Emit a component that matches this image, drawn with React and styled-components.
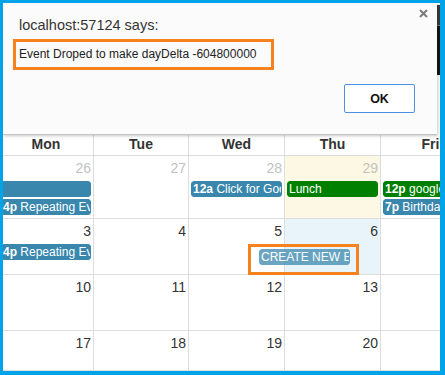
import React from "react";
import styled, { createGlobalStyle } from "styled-components";

const Global = createGlobalStyle`
  html, body { margin: 0; padding: 0; background: #fff; }
  body { font-family: "Liberation Sans", Arial, sans-serif; }
`;

const Frame = styled.div`
  position: relative;
  box-sizing: border-box;
  width: 445px;
  height: 375px;
  border-style: solid;
  border-color: #00a2e8;
  border-width: 3px 5px 4px 3px;
  overflow: hidden;
  background: #fff;
  display: flex;
  flex-direction: column;
`;

const Navbar = styled.div`
  flex: none;
  margin-top: 2px;
  height: 70px;
  background: linear-gradient(#3d3d3d 0 20px, #767676 20px 21px, #141414 21px);
`;

const Toolbar = styled.div`
  flex: none;
  height: 59px;
`;

const COLS = "95px 95px 96px 96px 100px";

const Calendar = styled.div`
  position: relative;
  flex: 1;
  margin-left: -4px;
  display: flex;
  flex-direction: column;
  font-size: 14px;
  color: #333;
`;

const HeadRow = styled.div`
  flex: none;
  display: grid;
  grid-template-columns: ${COLS};
  border-bottom: 1px solid #ddd;
`;

const HeadCell = styled.div`
  height: 21px;
  line-height: 21px;
  text-align: center;
  font-weight: bold;
  border-right: 1px solid #ddd;
`;

const Week = styled.div`
  box-sizing: border-box;
  display: grid;
  grid-template-columns: ${COLS};
  height: ${(p) => (p.$h ? `${p.$h}px` : "auto")};
  flex: ${(p) => (p.$h ? "none" : "1")};
  border-bottom: 1px solid #ddd;
`;

const DayCell = styled.div`
  min-width: 0;
  overflow: hidden;
  display: flex;
  flex-direction: column;
  border-right: 1px solid #ddd;
  background: ${(p) =>
    p.$mark === "today" ? "#fcf8e3" : p.$mark === "drop" ? "#e8f4fa" : "transparent"};
`;

const DayNum = styled.div`
  padding: 2px;
  line-height: 20px;
  text-align: right;
  color: ${(p) => (p.$other ? "#c2c2c2" : "#333")};
`;

const EventList = styled.div`
  display: flex;
  flex-direction: column;
  gap: 2px;
  padding-top: 1px;
`;

const Event = styled.div`
  box-sizing: border-box;
  height: 16px;
  margin: 0 2px 0 ${(p) => (p.$cont ? "0" : "2px")};
  padding: 0 1px;
  border: 1px solid ${(p) => p.$color};
  background: ${(p) => p.$color};
  border-radius: ${(p) => (p.$cont ? "0 3px 3px 0" : "3px")};
  color: #fff;
  font-size: 12px;
  line-height: 14px;
  white-space: nowrap;
  overflow: hidden;

  b {
    font-weight: bold;
  }
`;

const DragHelper = styled.div`
  position: absolute;
  left: 260px;
  top: 115px;
  box-sizing: border-box;
  width: 91px;
  height: 16px;
  padding: 0 1px;
  border: 1px solid #3a87ad;
  background: #3a87ad;
  opacity: 0.74;
  border-radius: 3px;
  color: #fff;
  font-size: 12px;
  line-height: 14px;
  text-transform: uppercase;
  white-space: nowrap;
  overflow: hidden;
`;

const Annotation = styled.div`
  position: absolute;
  left: 249px;
  top: 110px;
  box-sizing: border-box;
  width: 111px;
  height: 31px;
  border: 3px solid #f5821f;
`;

const Dialog = styled.div`
  position: absolute;
  left: 0;
  top: 0;
  z-index: 2;
  box-sizing: border-box;
  width: 434px;
  height: 132px;
  padding: 6px 9px 0 10px;
  background: #fbfbfb;
  border-bottom: 1px solid #c4c4c4;
  box-shadow: 1px 1px 3px rgba(0, 0, 0, 0.22);
  font-family: "Liberation Sans", Arial, sans-serif;
  color: #333;
`;

const DialogHead = styled.div`
  display: flex;
  justify-content: space-between;
  align-items: flex-start;
`;

const DialogTitle = styled.div`
  margin-top: 6px;
  padding-left: 6px;
  font-size: 14.5px;
  line-height: 20px;
  color: #333;
`;

const CloseIcon = styled.svg`
  display: block;
  width: 9px;
  height: 9px;
`;

const Message = styled.div`
  box-sizing: border-box;
  width: 261px;
  margin-top: 4px;
  padding: 4px 0 5px 3px;
  border: 3px solid #f5821f;
  font-size: 12px;
  line-height: 16px;
  color: #222;
  white-space: nowrap;
`;

const DialogFooter = styled.div`
  display: flex;
  justify-content: flex-end;
  margin-top: 14px;
  padding-right: 13px;
`;

const OkButton = styled.button`
  box-sizing: border-box;
  width: 71px;
  height: 29px;
  padding: 0;
  border: 1px solid #4f8fe3;
  border-radius: 2px;
  background: #fff;
  font-family: "Liberation Sans", Arial, sans-serif;
  font-size: 12.5px;
  font-weight: bold;
  color: #111;
`;

const BLUE = "#3a87ad";
const GREEN = "#008000";

const heads = ["Mon", "Tue", "Wed", "Thu", "Fri"];

const weeks = [
  {
    h: 63,
    days: [
      { n: 26, other: true, events: [{ cont: true, title: "" }, { time: "4p", title: "Repeating Event" }] },
      { n: 27, other: true },
      { n: 28, other: true, events: [{ time: "12a", title: "Click for Google" }] },
      { n: 29, other: true, mark: "today", events: [{ title: "Lunch", color: GREEN }] },
      { n: 30, other: true, events: [{ time: "12p", title: "google", color: GREEN }, { time: "7p", title: "Birthday Party" }] },
    ],
  },
  {
    h: 56,
    days: [
      { n: 3, events: [{ time: "4p", title: "Repeating Event" }] },
      { n: 4 },
      { n: 5 },
      { n: 6, mark: "drop" },
      { n: 7 },
    ],
  },
  { h: 56, days: [{ n: 10 }, { n: 11 }, { n: 12 }, { n: 13 }, { n: 14 }] },
  { h: 0, days: [{ n: 17 }, { n: 18 }, { n: 19 }, { n: 20 }, { n: 21 }] },
];

export default function App() {
  return (
    <>
      <Global />
      <Frame>
        <Navbar />
        <Toolbar />
        <Calendar>
          <HeadRow>
            {heads.map((h) => (
              <HeadCell key={h}>{h}</HeadCell>
            ))}
          </HeadRow>
          {weeks.map((w, wi) => (
            <Week key={wi} $h={w.h}>
              {w.days.map((d) => (
                <DayCell key={d.n} $mark={d.mark}>
                  <DayNum $other={d.other}>{d.n}</DayNum>
                  {d.events && (
                    <EventList>
                      {d.events.map((e, ei) => (
                        <Event key={ei} $color={e.color || BLUE} $cont={e.cont}>
                          {e.time && <b>{e.time}</b>}
                          {e.time ? " " : ""}
                          {e.title}
                        </Event>
                      ))}
                    </EventList>
                  )}
                </DayCell>
              ))}
            </Week>
          ))}
          <DragHelper>Create New Event</DragHelper>
          <Annotation />
        </Calendar>
        <Dialog>
          <DialogHead>
            <DialogTitle>localhost:57124 says:</DialogTitle>
            <CloseIcon viewBox="0 0 9 9">
              <path d="M1 1 L8 8 M8 1 L1 8" stroke="#7b7b7b" strokeWidth="2" fill="none" />
            </CloseIcon>
          </DialogHead>
          <Message>Event Droped to make dayDelta -604800000</Message>
          <DialogFooter>
            <OkButton>OK</OkButton>
          </DialogFooter>
        </Dialog>
      </Frame>
    </>
  );
}
